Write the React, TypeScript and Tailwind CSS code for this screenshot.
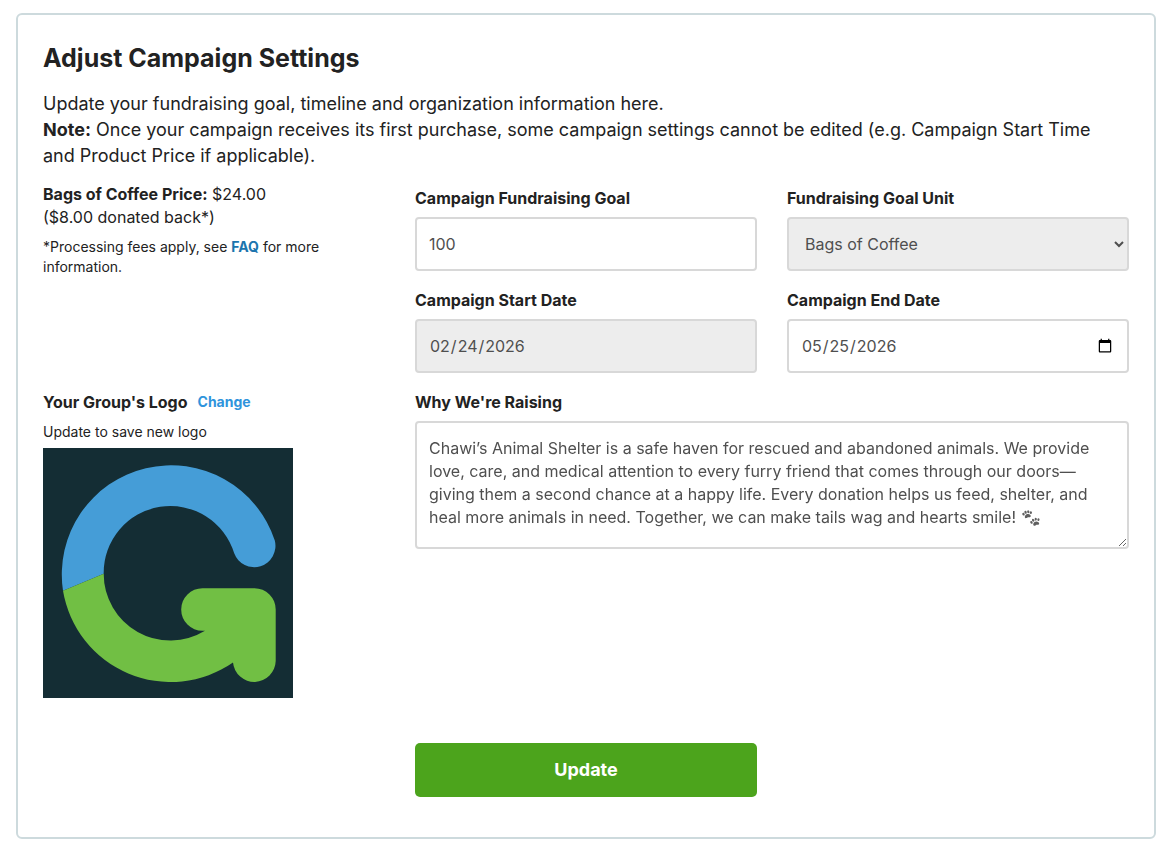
import type { ReactNode } from 'react';
import { clsx } from 'clsx';

const story =
  'Chawi’s Animal Shelter is a safe haven for rescued and abandoned animals. We provide love, care, and medical attention to every furry friend that comes through our doors—giving them a second chance at a happy life. Every donation helps us feed, shelter, and heal more animals in need. Together, we can make tails wag and hearts smile! 🐾';

const control =
  'block h-[54px] w-full rounded-[4px] border-2 border-[#d8d8d8] px-3 text-base text-[#4f4f4f] disabled:bg-[#ededed] disabled:opacity-100';

type FieldProps = {
  id: string;
  label: string;
  className?: string;
  children: ReactNode;
};

function Field({ id, label, className, children }: FieldProps) {
  return (
    <div className={clsx('flex flex-col gap-1', className)}>
      <label htmlFor={id} className="text-base font-bold leading-[30px]">
        {label}
      </label>
      {children}
    </div>
  );
}

function GroupLogo() {
  return (
    <svg viewBox="0 0 250 250" className="block h-[250px] w-[250px] bg-[#142d34]" role="img" aria-label="Group logo">
      <path
        fill="#459dd7"
        d="M20 142.7A109.2 109.2 0 0 1 231.8 92.6A21.3 21.3 0 0 1 191.2 105.3A66.7 66.7 0 0 0 60.7 125.7Z"
      />
      <path
        fill="#71bf44"
        d="M20 142.7A109.2 109.2 0 0 0 190 214.5A21.4 21.4 0 0 0 232.7 213V161.5A21.3 21.3 0 0 0 211.4 140.2H159.5A21.3 21.3 0 0 0 159.5 182.8H162A66.7 66.7 0 0 1 60.7 125.7Z"
      />
    </svg>
  );
}

export default function App() {
  return (
    <main className="bg-white pt-[13px] pr-[15px] pb-[15px] pl-4 font-['Inter',sans-serif] text-[#222222]">
      <form
        className="rounded-md border-2 border-[#cddadd] px-[25px] pt-[27px] pb-10"
        onSubmit={(e) => e.preventDefault()}
      >
        <h1 className="text-[25px] font-bold leading-8">Adjust Campaign Settings</h1>
        <p className="mt-[17px] pr-2 text-lg leading-[26px]">
          Update your fundraising goal, timeline and organization information here.
          <br />
          <strong>Note:</strong> Once your campaign receives its first purchase, some campaign settings cannot be edited
          (e.g. Campaign Start Time and Product Price if applicable).
        </p>

        <div className="mt-[14px] grid grid-cols-3 gap-x-[30px] gap-y-[14px]">
          {/* Pricing */}
          <div className="row-span-2">
            <p className="text-base leading-[23px]">
              <strong>Bags of Coffee Price:</strong> $24.00
              <br />
              ($8.00 donated back*)
            </p>
            <p className="mt-2 text-sm leading-5">
              *Processing fees apply, see{' '}
              <a href="#faq" className="font-bold text-[#1c75ae]">
                FAQ
              </a>{' '}
              for more information.
            </p>
          </div>

          <Field id="goal" label="Campaign Fundraising Goal">
            <input id="goal" type="text" inputMode="numeric" defaultValue="100" className={control} />
          </Field>
          <Field id="unit" label="Fundraising Goal Unit">
            <select id="unit" disabled className={control}>
              <option>Bags of Coffee</option>
            </select>
          </Field>
          <Field id="start" label="Campaign Start Date">
            <input
              id="start"
              type="date"
              disabled
              defaultValue="2026-02-24"
              className={clsx(control, '[&::-webkit-calendar-picker-indicator]:hidden')}
            />
          </Field>
          <Field id="end" label="Campaign End Date">
            <input id="end" type="date" defaultValue="2026-05-25" className={control} />
          </Field>

          {/* Logo */}
          <div>
            <div className="flex items-center gap-[10px]">
              <h2 className="text-base font-bold leading-[30px]">Your Group's Logo</h2>
              <button type="button" className="text-sm font-bold text-[#2f94dc]">
                Change
              </button>
            </div>
            <p className="mt-[5px] mb-[6px] text-sm leading-5">Update to save new logo</p>
            <GroupLogo />
          </div>

          {/* grayscale keeps the emoji in the same tone as the text */}
          <Field id="story" label="Why We're Raising" className="col-span-2">
            <textarea
              id="story"
              defaultValue={story}
              className="block h-32 w-full rounded-[4px] border-2 border-[#d8d8d8] px-3 py-[14px] text-base leading-[23px] text-[#4f4f4f] grayscale"
            />
          </Field>

          <button
            type="submit"
            className="col-start-2 mt-[31px] h-[54px] rounded-[5px] bg-[#4ca41c] text-lg font-bold text-white"
          >
            Update
          </button>
        </div>
      </form>
    </main>
  );
}
